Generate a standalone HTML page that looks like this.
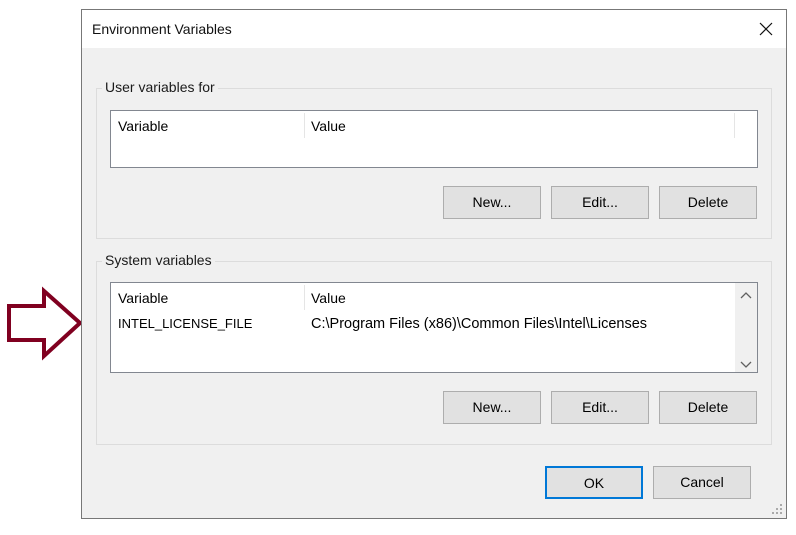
<!DOCTYPE html>
<html><head><style>
*{box-sizing:border-box;margin:0;padding:0}
body{width:796px;height:535px;background:#fff;position:relative;font-family:"Segoe UI","Liberation Sans",sans-serif;font-size:14px;color:#000;overflow:hidden}
.abs{position:absolute}
.dlg{left:81px;top:9px;width:706px;height:510px;border:1px solid #777;background:#f0f0f0}
.title{left:0;top:0;width:704px;height:38px;background:#fff}
.grp{border:1px solid #dcdcdc}
.lbl{background:#f0f0f0;padding:0 3px;font-size:14px;color:#1a1a1a}
.lb{background:#fff;border:1px solid #828790}
.btn{background:#e1e1e1;border:1px solid #adadad;text-align:center;line-height:31px;font-size:14px}
.t{font-size:14px;white-space:nowrap}
</style></head><body>
<svg class="abs" style="left:0;top:280px" width="90" height="90">
<polygon points="9,26 44,26 44,11 80,43 44,76 44,60 9,60" fill="none" stroke="#800020" stroke-width="4" stroke-linejoin="miter"/>
</svg>
<div class="abs dlg">
 <div class="abs title"></div>
 <div class="abs t" style="left:10px;top:11px;color:#111">Environment Variables</div>
 <svg class="abs" style="left:677px;top:12px" width="14" height="14"><path d="M1 1L13 13M13 1L1 13" stroke="#111" stroke-width="1.2"/></svg>
 <div class="abs grp" style="left:14px;top:78px;width:676px;height:151px"></div>
 <div class="abs lbl" style="left:20px;top:69px">User variables for</div>
 <div class="abs lb" style="left:28px;top:100px;width:648px;height:58px"></div>
 <div class="abs t" style="left:36px;top:108px">Variable</div>
 <div class="abs" style="left:222px;top:103px;width:1px;height:25px;background:#e5e5e5"></div>
 <div class="abs t" style="left:229px;top:108px">Value</div>
 <div class="abs" style="left:652px;top:103px;width:1px;height:25px;background:#e5e5e5"></div>
 <div class="abs btn" style="left:361px;top:176px;width:98px;height:33px">New...</div>
 <div class="abs btn" style="left:469px;top:176px;width:98px;height:33px">Edit...</div>
 <div class="abs btn" style="left:577px;top:176px;width:98px;height:33px">Delete</div>
 <div class="abs grp" style="left:14px;top:251px;width:676px;height:184px"></div>
 <div class="abs lbl" style="left:20px;top:242px">System variables</div>
 <div class="abs lb" style="left:28px;top:272px;width:648px;height:91px"></div>
 <div class="abs" style="left:653px;top:273px;width:22px;height:89px;background:#f0f0f0"></div>
 <svg class="abs" style="left:656px;top:280px" width="16" height="80"><path d="M3 8L8 3L13 8" fill="none" stroke="#606060" stroke-width="1.3"/><path d="M3 72L8 77L13 72" fill="none" stroke="#606060" stroke-width="1.3"/></svg>
 <div class="abs t" style="left:36px;top:280px">Variable</div>
 <div class="abs" style="left:222px;top:275px;width:1px;height:25px;background:#e5e5e5"></div>
 <div class="abs t" style="left:229px;top:280px">Value</div>
 <div class="abs t" style="left:36px;top:306px;font-size:13px">INTEL_LICENSE_FILE</div>
 <div class="abs t" style="left:229px;top:306px;font-size:14.5px">C:\Program Files (x86)\Common Files\Intel\Licenses</div>
 <div class="abs btn" style="left:361px;top:381px;width:98px;height:33px">New...</div>
 <div class="abs btn" style="left:469px;top:381px;width:98px;height:33px">Edit...</div>
 <div class="abs btn" style="left:577px;top:381px;width:98px;height:33px">Delete</div>
 <div class="abs btn" style="left:463px;top:456px;width:98px;height:33px;border:2px solid #0078d7;line-height:30px">OK</div>
 <div class="abs btn" style="left:571px;top:456px;width:98px;height:33px">Cancel</div>
 <svg class="abs" style="left:690px;top:494px" width="12" height="12" fill="#aaa"><rect x="8" y="0" width="2" height="2"/><rect x="4" y="4" width="2" height="2"/><rect x="8" y="4" width="2" height="2"/><rect x="0" y="8" width="2" height="2"/><rect x="4" y="8" width="2" height="2"/><rect x="8" y="8" width="2" height="2"/></svg>
</div>
</body></html>
